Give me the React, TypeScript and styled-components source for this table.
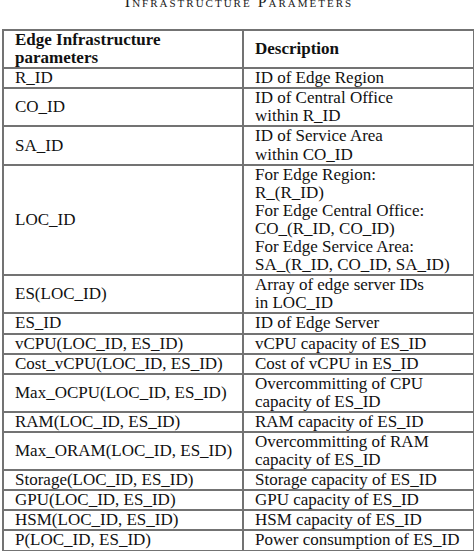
import React from "react";
import styled, { createGlobalStyle } from "styled-components";

const Global = createGlobalStyle`
  html, body { margin: 0; padding: 0; background: #ffffff; overflow: hidden; }
  body { font-family: "Liberation Serif", "Times New Roman", serif; color: #111; }
`;

const Page = styled.div`
  width: 474px;
  height: 551px;
  overflow: hidden;
  padding-left: 2px;
  box-sizing: border-box;
`;

const Caption = styled.div`
  margin-top: -6px;
  height: 35px;
  text-align: center;
  font-family: "Liberation Serif", "Times New Roman", serif;
  font-variant: small-caps;
  font-size: 16px;
  letter-spacing: 2px;
  line-height: 16px;
  color: #1a1a1a;
  padding-left: 2px;
`;

const Table = styled.table`
  border-collapse: collapse;
  width: 471px;
  table-layout: fixed;
  font-size: 17px;
  line-height: 18.1px;
`;

const Col = styled.col<{ $w: number }>`
  width: ${(p) => p.$w}px;
`;

const Cell = styled.td<{ $bold?: boolean }>`
  border: 2px solid #737373;
  padding: 0 8px 0 11px;
  vertical-align: middle;
  white-space: nowrap;
  text-align: left;
  font-weight: ${(p) => (p.$bold ? 700 : 400)};
  color: #111;
`;

const Line = styled.div``;

type Row = { param: string[]; desc: string[] };

const rows: Row[] = [
  { param: ["R_ID"], desc: ["ID of Edge Region"] },
  { param: ["CO_ID"], desc: ["ID of Central Office", "within R_ID"] },
  { param: ["SA_ID"], desc: ["ID of Service Area", "within CO_ID"] },
  {
    param: ["LOC_ID"],
    desc: [
      "For Edge Region:",
      "R_(R_ID)",
      "For Edge Central Office:",
      "CO_(R_ID, CO_ID)",
      "For Edge Service Area:",
      "SA_(R_ID, CO_ID, SA_ID)",
    ],
  },
  { param: ["ES(LOC_ID)"], desc: ["Array of edge server IDs", "in LOC_ID"] },
  { param: ["ES_ID"], desc: ["ID of Edge Server"] },
  { param: ["vCPU(LOC_ID, ES_ID)"], desc: ["vCPU capacity of ES_ID"] },
  { param: ["Cost_vCPU(LOC_ID, ES_ID)"], desc: ["Cost of vCPU in ES_ID"] },
  {
    param: ["Max_OCPU(LOC_ID, ES_ID)"],
    desc: ["Overcommitting of CPU", "capacity of ES_ID"],
  },
  { param: ["RAM(LOC_ID, ES_ID)"], desc: ["RAM capacity of ES_ID"] },
  {
    param: ["Max_ORAM(LOC_ID, ES_ID)"],
    desc: ["Overcommitting of RAM", "capacity of ES_ID"],
  },
  { param: ["Storage(LOC_ID, ES_ID)"], desc: ["Storage capacity of ES_ID"] },
  { param: ["GPU(LOC_ID, ES_ID)"], desc: ["GPU capacity of ES_ID"] },
  { param: ["HSM(LOC_ID, ES_ID)"], desc: ["HSM capacity of ES_ID"] },
  { param: ["P(LOC_ID, ES_ID)"], desc: ["Power consumption of ES_ID"] },
];

export default function App() {
  return (
    <>
      <Global />
      <Page>
        <Caption>Infrastructure Parameters</Caption>
        <Table>
          <colgroup>
            <Col $w={240} />
            <Col $w={231} />
          </colgroup>
          <thead>
            <tr>
              <Cell as="th" $bold>
                <Line>Edge Infrastructure</Line>
                <Line>parameters</Line>
              </Cell>
              <Cell as="th" $bold>
                <Line>Description</Line>
              </Cell>
            </tr>
          </thead>
          <tbody>
            {rows.map((r, i) => (
              <tr key={i}>
                <Cell>
                  {r.param.map((l, j) => (
                    <Line key={j}>{l}</Line>
                  ))}
                </Cell>
                <Cell>
                  {r.desc.map((l, j) => (
                    <Line key={j}>{l}</Line>
                  ))}
                </Cell>
              </tr>
            ))}
          </tbody>
        </Table>
      </Page>
    </>
  );
}
